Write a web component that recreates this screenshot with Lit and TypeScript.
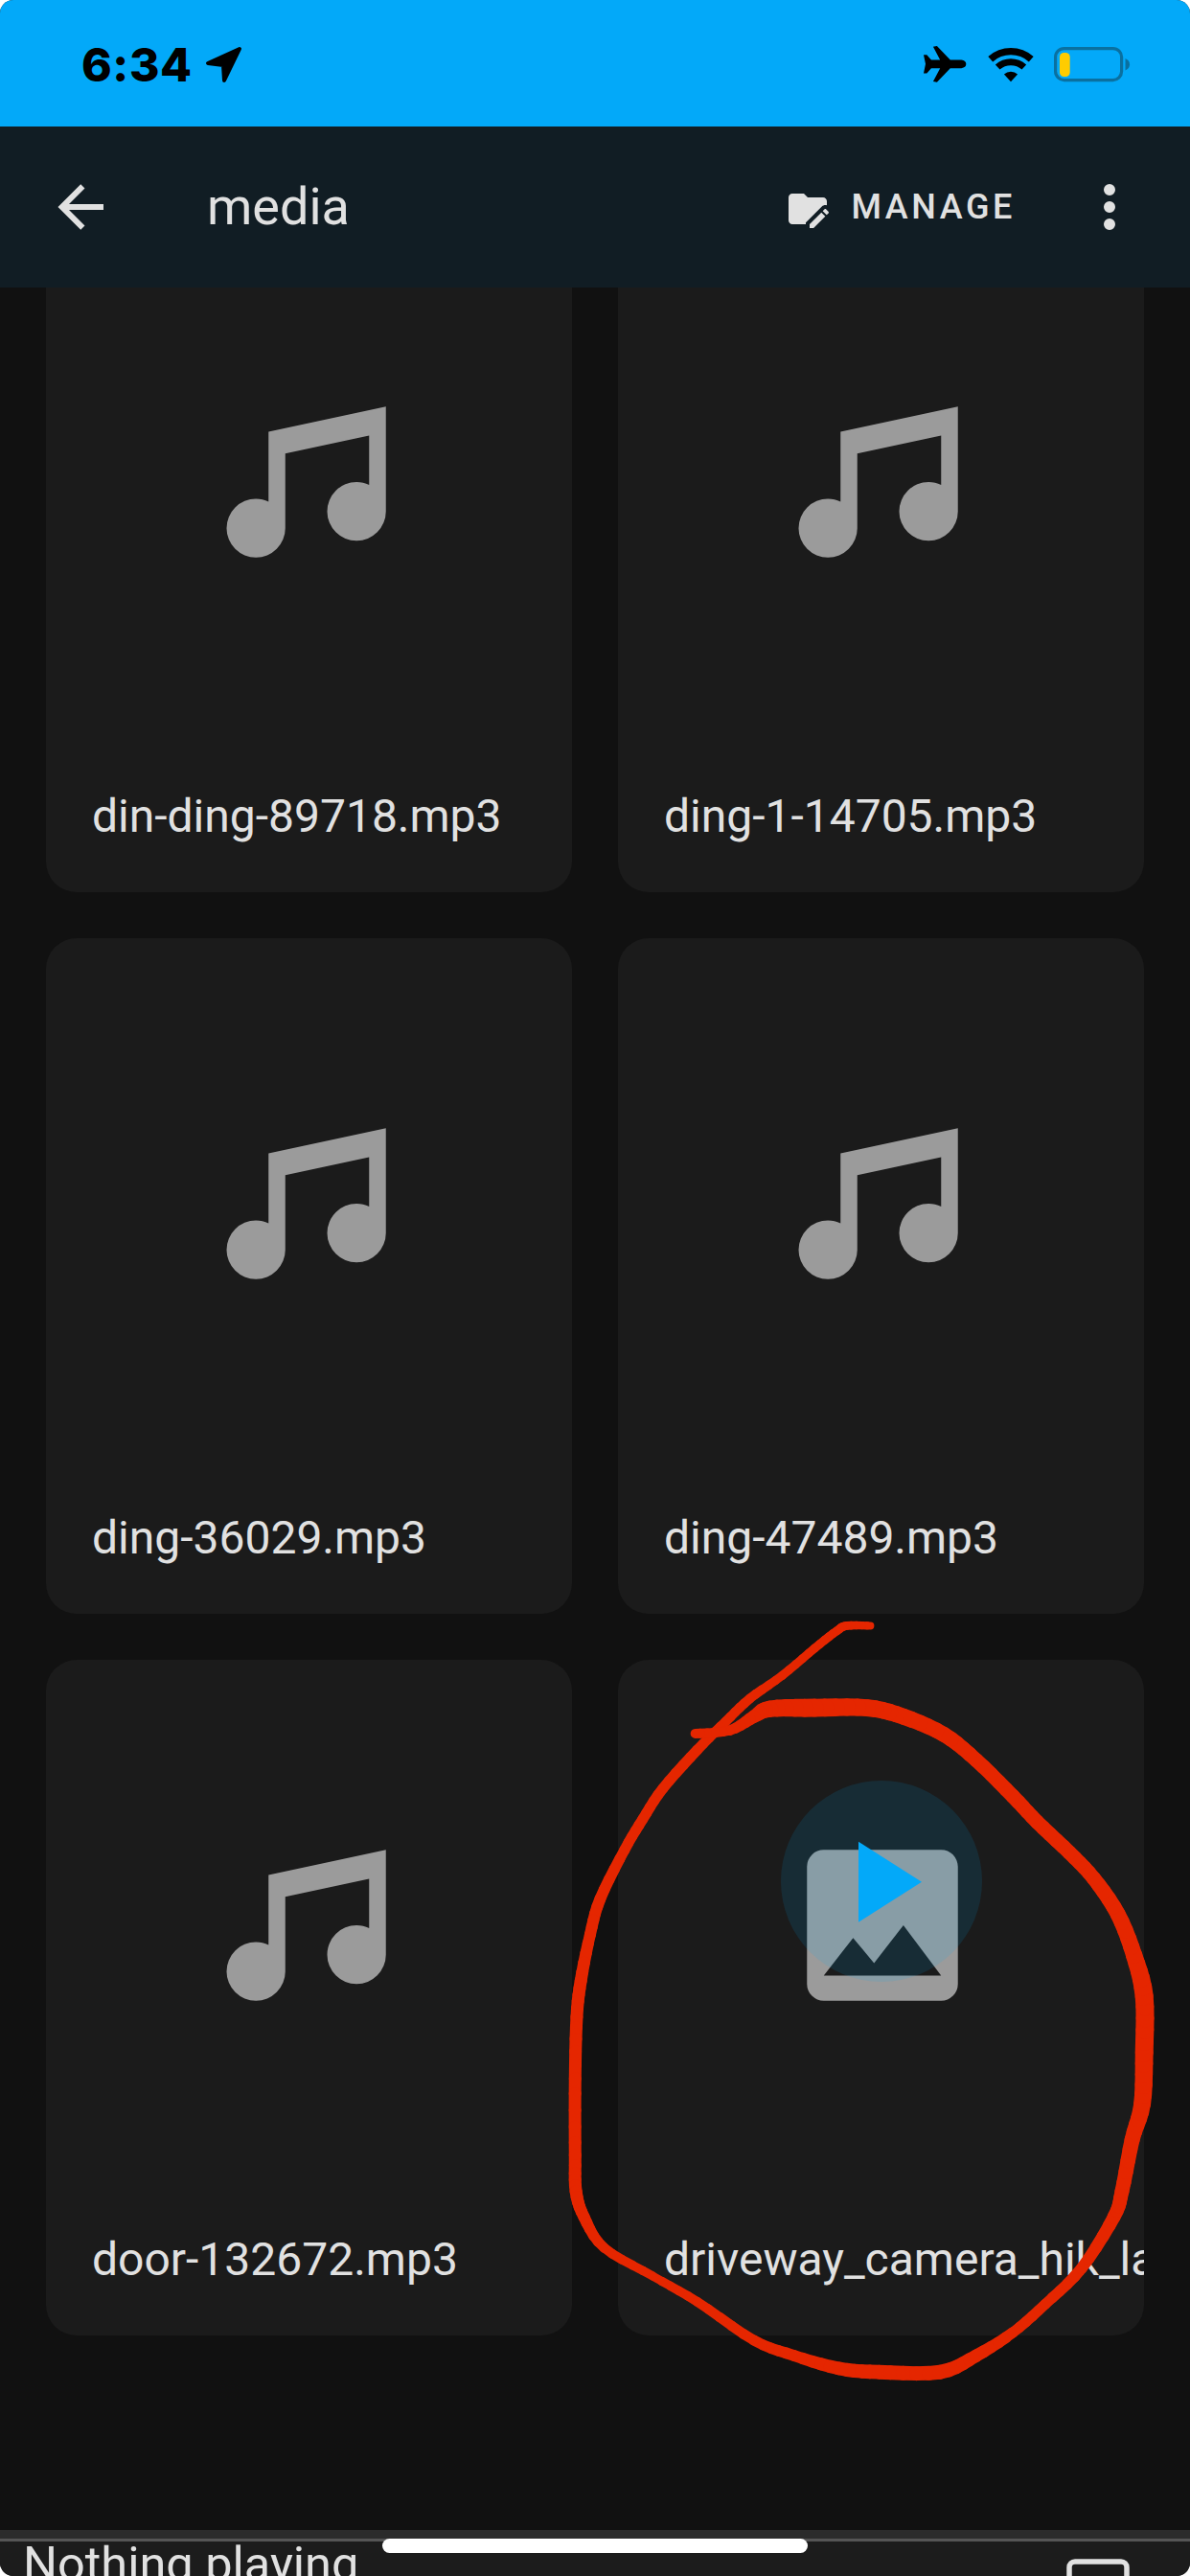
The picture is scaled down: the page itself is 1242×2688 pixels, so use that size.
import { LitElement, html, css, svg } from "lit";
import { customElement } from "lit/decorators.js";

const MUSIC = "M21,3V15.5A3.5,3.5 0 0,1 17.5,19A3.5,3.5 0 0,1 14,15.5A3.5,3.5 0 0,1 17.5,12C18.04,12 18.55,12.12 19,12.34V6.47L9,8.6V17.5A3.5,3.5 0 0,1 5.5,21A3.5,3.5 0 0,1 2,17.5A3.5,3.5 0 0,1 5.5,14C6.04,14 6.55,14.12 7,14.34V6L21,3Z";
const IMAGE = "M8.5,13.5L11,16.5L14.5,12L19,18H5M21,19V5C21,3.89 20.1,3 19,3H5A2,2 0 0,0 3,5V19A2,2 0 0,0 5,21H19A2,2 0 0,0 21,19Z";
const PLAY = "M8,5.14V19.14L19,12.14L8,5.14Z";
const BACK = "M20,11V13H8L13.5,18.5L12.08,19.92L4.16,12L12.08,4.08L13.5,5.5L8,11H20Z";
const FOLDER_EDIT = "M19.39 10.74L11 19.13V20H4C2.9 20 2 19.11 2 18V6C2 4.89 2.89 4 4 4H10L12 6H20C21.1 6 22 6.89 22 8V10.15C21.74 10.06 21.46 10 21.17 10C20.5 10 19.87 10.26 19.39 10.74M13 19.96V22H15.04L21.17 15.88L19.13 13.83L13 19.96M22.85 13.47L21.53 12.15C21.33 11.95 21 11.95 20.81 12.15L19.83 13.13L21.87 15.17L22.85 14.19C23.05 14 23.05 13.67 22.85 13.47Z";
const DOTS = "M12,16A2,2 0 0,1 14,18A2,2 0 0,1 12,20A2,2 0 0,1 10,18A2,2 0 0,1 12,16M12,10A2,2 0 0,1 14,12A2,2 0 0,1 12,14A2,2 0 0,1 10,12A2,2 0 0,1 12,10M12,4A2,2 0 0,1 14,6A2,2 0 0,1 12,8A2,2 0 0,1 10,6A2,2 0 0,1 12,4Z";

/* hand-drawn annotation: [x, y, width], x/y in the coordinates of a crop of the page */
const RAW: number[][] = [
  [778,68,8],[720,68,9],[695,78,9],[640,112,9],[560,165,9],[480,210,10],[420,255,10],[350,310,11],
  [265,385,11],[215,445,11],[170,505,11],[110,600,12],[85,670,12],[62,760,13],[52,830,13],[48,950,13],
  [48,1100,13],[50,1170,13],[70,1220,12],[120,1280,10],[240,1335,9],[350,1385,10],[490,1460,11],[590,1490,12],
  [700,1515,14],[800,1522,15],[950,1522,15],[1040,1490,13],[1130,1445,11],[1210,1390,11],[1300,1320,12],[1380,1220,14],
  [1400,1170,15],[1425,1070,16],[1450,1000,18],[1455,900,19],[1455,790,19],[1430,710,17],[1390,630,16],[1330,560,15],
  [1270,510,15],[1190,450,15],[1130,400,15],[1040,330,15],[960,280,16],[860,245,17],[770,228,18],[640,228,19],
  [530,230,17],[490,245,13],[430,272,10],[345,278,10],
];

function strokePoints(): number[][] {
  const p = RAW.map(([x, y, w]) => [580 + x / 2.369, 1660 + y / 1.867, w]);
  const out: number[][] = [];
  for (let i = 0; i < p.length - 1; i++) {
    const a = p[Math.max(0, i - 1)], b = p[i], c = p[i + 1], d = p[Math.min(p.length - 1, i + 2)];
    for (let s = 0; s < 5; s++) {
      const t = s / 5, t2 = t * t, t3 = t2 * t;
      const f = (k: number) => 0.5 * (2 * b[k] + (c[k] - a[k]) * t + (2 * a[k] - 5 * b[k] + 4 * c[k] - d[k]) * t2 + (3 * b[k] - a[k] - 3 * c[k] + d[k]) * t3);
      out.push([f(0), f(1), b[2] + (c[2] - b[2]) * t]);
    }
  }
  out.push(p[p.length - 1]);
  return out;
}

interface Item { name: string; kind: "audio" | "video"; }
const ITEMS: Item[] = [
  { name: "din-ding-89718.mp3", kind: "audio" },
  { name: "ding-1-14705.mp3", kind: "audio" },
  { name: "ding-36029.mp3", kind: "audio" },
  { name: "ding-47489.mp3", kind: "audio" },
  { name: "door-132672.mp3", kind: "audio" },
  { name: "driveway_camera_hik_la", kind: "video" },
];

@customElement("app-root")
export class AppRoot extends LitElement {
  static styles = css`
    :host { display: block; width: 1242px; height: 2688px; background: #fff; font-family: Roboto, "Liberation Sans", sans-serif; }
    .screen { position: relative; width: 1242px; height: 2688px; border-radius: 14px; overflow: hidden; display: flex; flex-direction: column; background: #111; }
    .status { height: 132px; flex: none; background: #03a9f9; display: flex; align-items: center; padding: 3px 0 0 85px; box-sizing: border-box; color: #000; }
    .time { font-family: Inter, "Liberation Sans", sans-serif; font-weight: 800; font-size: 48px; line-height: 48px; letter-spacing: 0.6px; }
    .loc { margin-left: 13px; }
    .status-right { margin-left: auto; margin-right: 62px; display: flex; align-items: center; }
    .plane { margin-right: 20px; }
    .wifi { margin-right: 20px; }
    .appbar { height: 168px; flex: none; background: #111d24; color: #e1e1e1; display: flex; align-items: center; padding: 0 48px; box-sizing: border-box; position: relative; z-index: 1; }
    .appbar svg { fill: currentColor; display: block; }
    .title { font-size: 54px; line-height: 60px; margin-left: 96px; flex: 1; }
    .manage { display: flex; align-items: center; gap: 21px; margin-right: 62px; font-size: 36px; font-weight: 500; letter-spacing: 3.6px; }
    .manage svg { margin-top: 4px; }
    main { flex: 1; min-height: 0; overflow: hidden; }
    .grid { display: grid; grid-template-columns: 549px 549px; grid-auto-rows: 705px; gap: 48px; padding: 0 48px; margin-top: -74px; }
    .card { background: #1b1b1b; border-radius: 32px; overflow: hidden; display: flex; flex-direction: column; min-width: 0; }
    .thumb { position: relative; width: 210px; height: 210px; margin: 172px 0 0 171px; }
    .thumb > svg { display: block; fill: #9b9b9b; }
    .play { position: absolute; left: -1px; top: -46px; width: 210px; height: 210px; border-radius: 50%; background: rgba(3, 169, 244, 0.12); display: flex; align-items: center; justify-content: center; }
    .play svg { fill: #03a9f9; display: block; }
    .name { margin-top: auto; padding: 0 0 49px 48px; font-size: 48px; line-height: 60px; color: #e1e1e1; white-space: nowrap; }
    .bottom { height: 48px; flex: none; background: #1c1c1c; overflow: hidden; box-sizing: border-box; }
    .bar-top { height: 9px; background: #2b2b2b; border-bottom: 3px solid #555; box-sizing: content-box; }
    .bar-row { display: flex; justify-content: space-between; padding: 4px 63px 0 24px; color: #e1e1e1; }
    .now { font-size: 50.5px; line-height: 40px; white-space: nowrap; }
    .device { display: block; margin-top: 14px; }
    .home { position: absolute; left: 399px; top: 2649px; width: 444px; height: 15px; border-radius: 8px; background: #fff; }
    .ink { position: absolute; left: 0; top: 0; pointer-events: none; z-index: 2; }
  `;

  private card(item: Item) {
    return html`<div class="card">
      <div class="thumb">
        <svg width="210" height="210" viewBox="0 0 24 24"><path fill-rule="evenodd" d=${item.kind === "audio" ? MUSIC : IMAGE}></path></svg>
        ${item.kind === "video"
          ? html`<div class="play"><svg width="144" height="144" viewBox="0 0 24 24"><path d=${PLAY}></path></svg></div>`
          : ""}
      </div>
      <div class="name">${item.name}</div>
    </div>`;
  }

  render() {
    const pts = strokePoints();
    return html`<div class="screen">
      <div class="status">
        <span class="time">6:34</span>
        <svg class="loc" width="40" height="40" viewBox="0 0 40 40"><path d="M36,3 L3,18 L19,20 L20,36 Z" fill="#000" stroke="#000" stroke-width="4" stroke-linejoin="round"></path></svg>
        <div class="status-right">
          <svg class="plane" width="48" height="43" viewBox="30 22 145 130"><path d="M36,56 L46,56 L60,72 L88,72 L66,30 L78,28 L120,72 L155,72 Q170,74 170,85 Q170,96 155,98 L120,98 L78,142 L66,140 L88,98 L60,98 L46,114 L36,114 L42,85Z" fill="#000"></path></svg>
          <svg class="wifi" width="50" height="39" viewBox="235 22 150 118" fill="#000">
            <path d="M238.4,55.5 A107,107 0 0 1 381.6,55.5 L366.9,71.8 A85,85 0 0 0 253.1,71.8Z"></path>
            <path d="M261.2,80.8 A73,73 0 0 1 358.8,80.8 L344.8,96.4 A52,52 0 0 0 275.2,96.4Z"></path>
            <path d="M288.6,111.2 A32,32 0 0 1 331.4,111.2 L310,135Z"></path>
          </svg>
          <svg width="80" height="38" viewBox="0 0 80 38">
            <rect x="1.6" y="1.6" width="69" height="33" rx="9" fill="none" stroke="#0a70a0" stroke-width="3.2"></rect>
            <rect x="6" y="6" width="10.7" height="25" rx="4.5" fill="#ffcc00"></rect>
            <path d="M74.5,12 Q79,14 79,18.3 Q79,22.5 74.5,24.5Z" fill="#0a70a0"></path>
          </svg>
        </div>
      </div>
      <div class="appbar">
        <svg width="72" height="72" viewBox="0 0 24 24"><path d=${BACK}></path></svg>
        <div class="title">media</div>
        <div class="manage">
          <svg width="48" height="48" viewBox="0 0 24 24"><path d=${FOLDER_EDIT}></path></svg>
          <span>MANAGE</span>
        </div>
        <svg width="72" height="72" viewBox="0 0 24 24"><path d=${DOTS}></path></svg>
      </div>
      <main><div class="grid">${ITEMS.map((i) => this.card(i))}</div></main>
      <div class="bottom">
        <div class="bar-top"></div>
        <div class="bar-row">
          <span class="now">Nothing playing</span>
          <svg class="device" width="66" height="30" viewBox="0 0 66 30"><rect x="3" y="3" width="60" height="50" rx="6" fill="none" stroke="#e1e1e1" stroke-width="5.5"></rect></svg>
        </div>
      </div>
      <div class="home"></div>
      <svg class="ink" width="1242" height="2688" viewBox="0 0 1242 2688" fill="none" stroke="#e52600" stroke-linecap="round">
        ${pts.slice(0, -1).map((p, i) => svg`<line x1=${p[0]} y1=${p[1]} x2=${pts[i + 1][0]} y2=${pts[i + 1][1]} stroke-width=${p[2]}></line>`)}
      </svg>
    </div>`;
  }
}
